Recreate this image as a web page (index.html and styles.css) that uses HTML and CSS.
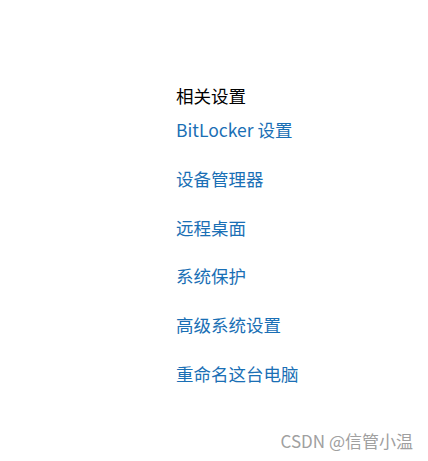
FILE: index.html
```html
<!DOCTYPE html>
<html lang="zh">
<head>
<meta charset="utf-8">
<link rel="stylesheet" href="styles.css">
</head>
<body>
<div class="panel">
  <div class="title">相关设置</div>
  <ul class="links">
    <li><a class="link">BitLocker 设置</a></li>
    <li><a class="link">设备管理器</a></li>
    <li><a class="link">远程桌面</a></li>
    <li><a class="link">系统保护</a></li>
    <li><a class="link">高级系统设置</a></li>
    <li><a class="link">重命名这台电脑</a></li>
  </ul>
</div>
<div class="watermark">CSDN @信管小温</div>
</body>
</html>
```
FILE: styles.css
```css
html, body {
  margin: 0;
  padding: 0;
  background: #fff;
}
body {
  width: 428px;
  height: 461px;
  position: relative;
  overflow: hidden;
  font-family: "Noto Sans CJK SC", "Noto Sans", sans-serif;
}
.panel {
  padding: 84px 0 0 176px;
}
.title {
  font-size: 17.5px;
  line-height: 24px;
  color: #000;
}
.links {
  list-style: none;
  margin: 10px 0 0;
  padding: 0;
  display: flex;
  flex-direction: column;
  gap: 24.8px;
}
.link {
  display: block;
  font-size: 17.5px;
  line-height: 24px;
  color: #1a6fb5;
  text-decoration: none;
}
.watermark {
  position: absolute;
  right: 15px;
  bottom: 8px;
  font-size: 17px;
  line-height: 24px;
  color: #a0a0a0;
}
```
